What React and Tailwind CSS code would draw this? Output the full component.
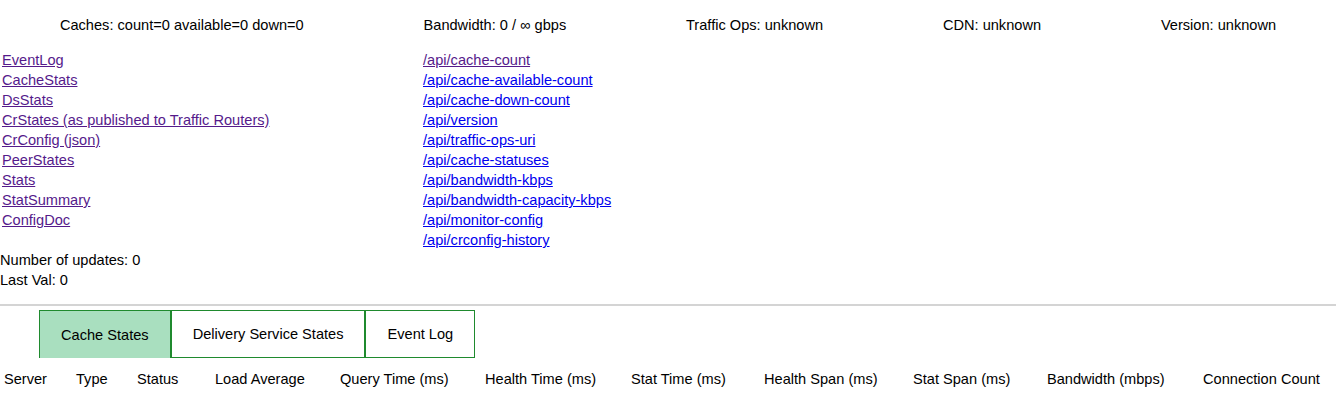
const stats = [
  "Caches: count=0 available=0 down=0",
  "Bandwidth: 0 / ∞ gbps",
  "Traffic Ops: unknown",
  "CDN: unknown",
  "Version: unknown",
];

const pageLinks = [
  "EventLog",
  "CacheStats",
  "DsStats",
  "CrStates (as published to Traffic Routers)",
  "CrConfig (json)",
  "PeerStates",
  "Stats",
  "StatSummary",
  "ConfigDoc",
];

const apiLinks = [
  { label: "/api/cache-count", visited: true },
  { label: "/api/cache-available-count" },
  { label: "/api/cache-down-count" },
  { label: "/api/version" },
  { label: "/api/traffic-ops-uri" },
  { label: "/api/cache-statuses" },
  { label: "/api/bandwidth-kbps" },
  { label: "/api/bandwidth-capacity-kbps" },
  { label: "/api/monitor-config" },
  { label: "/api/crconfig-history" },
];

const tabs = ["Cache States", "Delivery Service States", "Event Log"];

// column widths follow the reference text starts
const columns = [
  { label: "Server", w: "w-[72px]" },
  { label: "Type", w: "w-[61px]" },
  { label: "Status", w: "w-[78px]" },
  { label: "Load Average", w: "w-[125px]" },
  { label: "Query Time (ms)", w: "w-[145px]" },
  { label: "Health Time (ms)", w: "w-[146px]" },
  { label: "Stat Time (ms)", w: "w-[133px]" },
  { label: "Health Span (ms)", w: "w-[149px]" },
  { label: "Stat Span (ms)", w: "w-[134px]" },
  { label: "Bandwidth (mbps)", w: "w-[156px]" },
  { label: "Connection Count", w: "w-[129px]" },
];

export default function App() {
  return (
    <div className="w-[1336px] h-[401px] overflow-hidden bg-white text-[14.6px] leading-[20px] text-black font-['Liberation_Sans',Arial,sans-serif]">
      <div className="flex justify-around pt-[15px]">
        {stats.map((s) => (
          <span key={s} className="whitespace-nowrap">{s}</span>
        ))}
      </div>

      <div className="flex mt-[15px]">
        <div className="w-[423px] pl-[2px] flex flex-col">
          {pageLinks.map((l) => (
            <a key={l} href="#" className="text-[#551a8b] underline w-fit">{l}</a>
          ))}
        </div>
        <div className="flex flex-col">
          {apiLinks.map((l) => (
            <a
              key={l.label}
              href="#"
              className={l.visited ? "text-[#551a8b] underline w-fit" : "text-[#0000ee] underline w-fit"}
            >
              {l.label}
            </a>
          ))}
        </div>
      </div>

      <div>
        <div>Number of updates: 0</div>
        <div>Last Val: 0</div>
      </div>

      <div className="mt-[14px] h-[2px] bg-[#d4d4d4]" />

      <div className="flex pl-[39px] mt-[4px]">
        {tabs.map((t, i) => (
          <div
            key={t}
            className={
              i === 0
                ? "h-[48px] px-[21px] flex items-center border border-b-0 border-[#1f8a2e] bg-[#a9dfbf]"
                : "h-[48px] px-[21px] flex items-center border border-[#1f8a2e] bg-white"
            }
          >
            {t}
          </div>
        ))}
      </div>

      <div className="flex pl-[4px] mt-[11px]">
        {columns.map((c) => (
          <span key={c.label} className={`${c.w} shrink-0 whitespace-nowrap`}>
            {c.label}
          </span>
        ))}
      </div>
    </div>
  );
}
